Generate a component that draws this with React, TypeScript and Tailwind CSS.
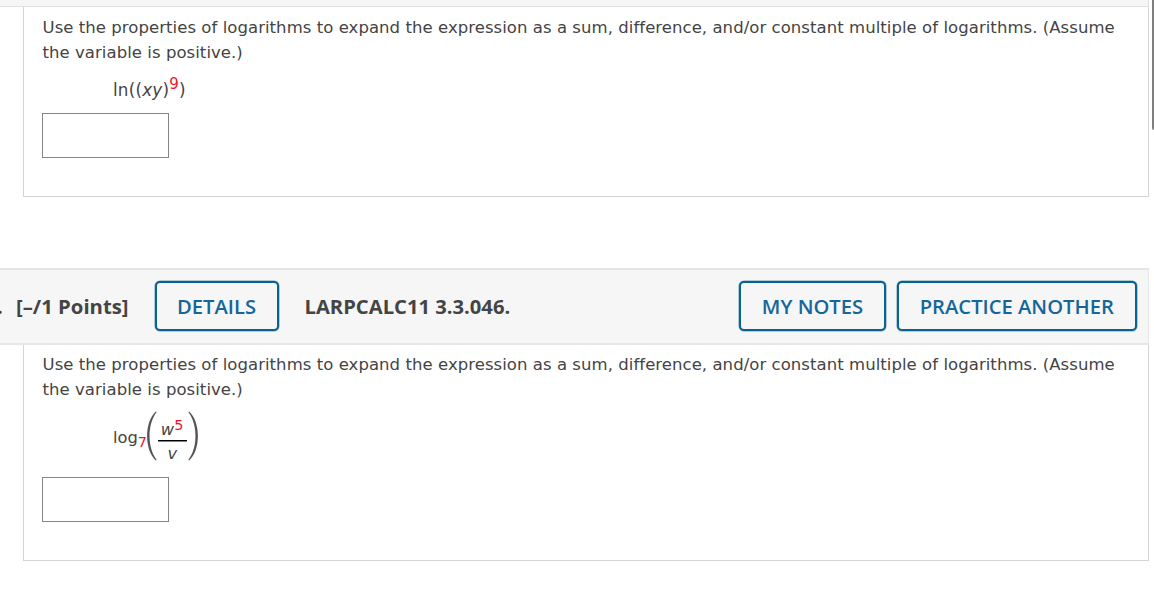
import React from "react";

function OutlineButton({
  className,
  children,
}: {
  className: string;
  children: React.ReactNode;
}) {
  return (
    <button
      className={`mb-px h-[50px] shrink-0 rounded-[5px] border-2 border-[#0b6190] bg-[#f6f6f6] text-center font-semibold whitespace-nowrap text-[#15669a] ring-[0.5px] ring-[#0b6190]/60 ${className}`}
    >
      {children}
    </button>
  );
}

function Instructions() {
  return (
    <p className="text-[16.5px] leading-[25px] tracking-[0.053px] whitespace-nowrap">
      Use the properties of logarithms to expand the expression as a sum,
      difference, and/or constant multiple of logarithms. (Assume
      <br />
      the variable is positive.)
    </p>
  );
}

function AnswerBox() {
  return (
    <input
      aria-label="Answer"
      className="-ml-[0.5px] block h-[45px] w-[127px] border border-[#858585] bg-white outline-none"
    />
  );
}

function Paren({ flip = false }: { flip?: boolean }) {
  return (
    <svg
      viewBox="0 0 11 50"
      className={`h-[50px] w-[11px] shrink-0 ${flip ? "-scale-x-100" : ""}`}
      fill="#555"
    >
      <path d="M9.8 0.5 C-1.8 11 -1.8 39 9.8 49.5 L10.6 48.7 C1.2 37 1.2 13 10.6 1.3 Z" />
    </svg>
  );
}

export default function App() {
  return (
    <div className="relative h-[614px] w-[1154px] overflow-hidden bg-white font-['DejaVu_Sans',Verdana,sans-serif] text-[#444]">
      {/* First question */}
      <section>
        <div className="h-[7px] w-[1149px] border-r border-b border-[#e0e0e0] bg-[#f6f6f6]" />
        <div className="ml-[23px] h-[190px] w-[1126px] border border-t-0 border-[#d4d4d4] pt-[8px] pl-[18.5px]">
          <Instructions />
          <div className="mt-[11px] ml-[70.5px] h-[37px] text-[16.8px] leading-[28px] tracking-[0.2px] whitespace-nowrap">
            ln((<i>xy</i>)
            <span className="relative -top-[7px] text-[15px] leading-none text-[#f0142f]">9</span>)
          </div>
          <AnswerBox />
        </div>
      </section>

      {/* Second question */}
      <section className="mt-[71px]">
        <header className="flex h-[77px] w-[1149px] items-center border-t-2 border-r border-b-2 border-[#e6e6e6] bg-[#f6f6f6] font-['Open_Sans',sans-serif] text-[20.3px]">
          <div className="-ml-[3px] w-[19px] shrink-0 font-bold">.</div>
          <h2 className="w-[138.5px] shrink-0 font-bold whitespace-nowrap">[–/1 Points]</h2>
          <OutlineButton className="w-[124px] text-[20.2px]">DETAILS</OutlineButton>
          <span className="ml-[26px] text-[20.2px] font-bold whitespace-nowrap">LARPCALC11 3.3.046.</span>
          <div className="mr-[11.5px] ml-auto flex gap-[11px] text-[20.2px]">
            <OutlineButton className="w-[147px]">MY NOTES</OutlineButton>
            <OutlineButton className="w-[239.5px]">PRACTICE ANOTHER</OutlineButton>
          </div>
        </header>
        <div className="ml-[23px] h-[216px] w-[1126px] border border-t-0 border-[#d4d4d4] pt-[7px] pl-[18.5px]">
          <Instructions />
          <div className="mt-[9px] ml-[70.5px] flex h-[50px] items-center text-[16.3px] whitespace-nowrap">
            <span className="relative top-[2px] leading-none">log</span>
            <span className="relative top-[6px] w-[8px] text-[14.5px] leading-none text-[#f0142f]">7</span>
            <Paren />
            <div className="relative top-[5px] mx-px flex w-[29px] flex-col items-center">
              <div className="h-[23px] w-full border-b border-black pl-[3px] leading-[23px] shadow-[0_0.5px_0_#000]">
                <i>w</i>
                <span className="relative -top-[5px] text-[14.5px] leading-none text-[#f0142f]">5</span>
              </div>
              <i className="h-[24px] leading-[25px]">v</i>
            </div>
            <Paren flip />
          </div>
          <div className="mt-[16px]">
            <AnswerBox />
          </div>
        </div>
      </section>

      {/* Scroll thumb over the right edge */}
      <div className="absolute top-0 right-0 h-[130px] w-[2px] rounded-bl-[2px] bg-[#7f7f7f]" />
    </div>
  );
}
